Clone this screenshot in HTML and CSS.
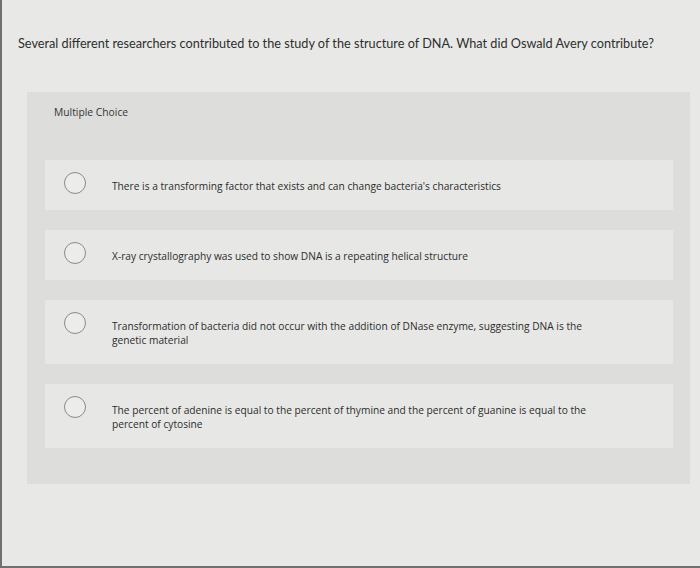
FILE: index.html
```html
<!DOCTYPE html>
<html>
<head>
<meta charset="utf-8">
<link rel="stylesheet" href="styles.css">
</head>
<body>
<div class="page">
  <p class="question">Several different researchers contributed to the study of the structure of DNA. What did Oswald Avery contribute?</p>
  <div class="panel">
    <div class="kind">Multiple Choice</div>
    <div class="options">
      <div class="option">
        <span class="radio"></span>
        <div class="label">There is a transforming factor that exists and can change bacteria's characteristics</div>
      </div>
      <div class="option">
        <span class="radio"></span>
        <div class="label">X-ray crystallography was used to show DNA is a repeating helical structure</div>
      </div>
      <div class="option">
        <span class="radio"></span>
        <div class="label">Transformation of bacteria did not occur with the addition of DNase enzyme, suggesting DNA is the<br>genetic material</div>
      </div>
      <div class="option">
        <span class="radio"></span>
        <div class="label">The percent of adenine is equal to the percent of thymine and the percent of guanine is equal to the<br>percent of cytosine</div>
      </div>
    </div>
  </div>
</div>
</body>
</html>
```

FILE: styles.css
```css
html {
  margin: 0;
  padding: 0;
  background: #707070;
  height: 568px;
  overflow: hidden;
}
body {
  margin: 0 0 0 2px;
  padding: 0;
  font-family: "Lato", "Liberation Sans", sans-serif;
  color: #333;
}
.page {
  height: 566px;
  background: #e8e9e6;
  padding-top: 35px;
  box-sizing: border-box;
}
.question {
  margin: 0 0 0 16px;
  font-size: 12.7px;
  line-height: 16px;
  color: #2e2e2e;
}
.panel {
  margin: 41px 10px 0 25px;
  background: #dddedc;
  padding: 13px 17px 36px 18px;
}
.kind {
  margin-left: 9px;
  font-family: "Open Sans", "Liberation Sans", sans-serif;
  font-size: 10.3px;
  line-height: 14px;
  color: #353535;
}
.options {
  margin-top: 41px;
  display: flex;
  flex-direction: column;
  gap: 20px;
}
.option {
  background: #e7e8e6;
  display: flex;
  align-items: flex-start;
  padding: 19px 20px 17px 19px;
}
.radio {
  flex: none;
  width: 20px;
  height: 20px;
  border: 1.5px solid #8a8a8a;
  border-radius: 50%;
  background: #ececea;
  margin-top: -7px;
  margin-bottom: -3px;
}
.label {
  margin-left: 26px;
  font-family: "Open Sans", "Liberation Sans", sans-serif;
  font-size: 10.2px;
  font-weight: 500;
  line-height: 14px;
  color: #2c2c2c;
}
```
